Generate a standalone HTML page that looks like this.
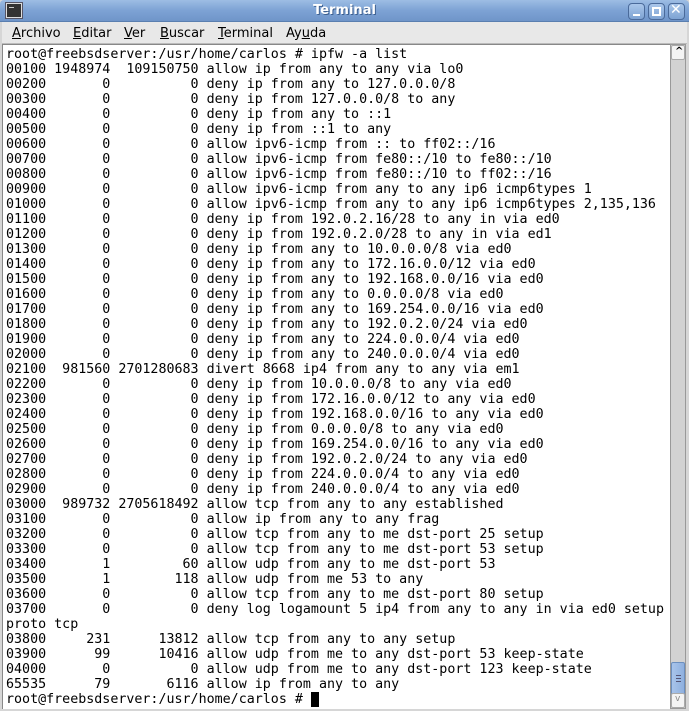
<!DOCTYPE html>
<html><head><meta charset="utf-8"><style>
*{margin:0;padding:0;box-sizing:border-box}
body{width:689px;height:711px;overflow:hidden;background:#d6d6d6;position:relative;font-family:"DejaVu Sans","Liberation Sans",sans-serif}
#title{position:absolute;left:0;top:0;width:689px;height:22px;background:linear-gradient(#9dbde4,#7da2d4 50%,#6f95c9);border-bottom:1px solid #5a7fb0;border-radius:4px 4px 0 0}
#title .t{position:absolute;left:0;right:0;top:3px;text-align:center;color:#fff;font-weight:bold;font-size:13px;text-shadow:1px 1px 0 #3d5f8f}
#icon{position:absolute;left:6px;top:3px;width:16px;height:15px;background:#333;border:1px solid #ddd;outline:1px solid #556}
#icon:after{content:"";position:absolute;left:2px;top:3px;width:5px;height:1px;background:#ccc}
.btn{position:absolute;top:3px;width:17px;height:17px;border:1px solid #4a6a9a;border-radius:4px;background:linear-gradient(#a9c6ea,#7ea3d3)}
#menu{position:absolute;left:2px;top:22px;width:685px;height:22px;background:#e8e8e8;border-bottom:1px solid #bbb;font-size:13px;color:#000}
#menu span{position:absolute;top:4px}
#term{position:absolute;left:2px;top:44px;width:668px;height:665px;background:#fff;border-left:1px solid #888;border-top:1px solid #888}
pre{position:absolute;left:3px;top:2px;font-family:"DejaVu Sans Mono","Liberation Mono",monospace;font-size:13.33px;line-height:15px;color:#000}
#sb{position:absolute;left:670px;top:44px;width:16px;height:665px;background:#d2d2d2;border:1px solid #999}
.arr{position:absolute;left:0;width:14px;height:15px;background:#f4f4f4;border:1px solid #aaa;border-radius:2px}
#thumb{position:absolute;left:0;top:617px;width:14px;height:35px;background:linear-gradient(90deg,#a8c4ea,#8fb0df);border:1px solid #6c8fbf;border-radius:2px}
</style></head><body>
<div id="title"><div id="icon"></div><div class="t">Terminal</div>
<div class="btn" style="left:628px"><div style="position:absolute;left:4px;top:10px;width:7px;height:2px;background:#fff"></div></div>
<div class="btn" style="left:648px"><div style="position:absolute;left:3px;top:3px;width:9px;height:9px;border:2px solid #fff"></div></div>
<div class="btn" style="left:668px"><div style="position:absolute;left:1px;top:-2px;color:#fff;font-weight:bold;font-size:14px">✕</div></div>
</div>
<div id="menu"><span style="left:10px"><u>A</u>rchivo</span><span style="left:71px"><u>E</u>ditar</span><span style="left:122px"><u>V</u>er</span><span style="left:158px"><u>B</u>uscar</span><span style="left:216px"><u>T</u>erminal</span><span style="left:284px">Ay<u>u</u>da</span></div>
<div id="term"><pre>root@freebsdserver:/usr/home/carlos # ipfw -a list
00100 1948974  109150750 allow ip from any to any via lo0
00200       0          0 deny ip from any to 127.0.0.0/8
00300       0          0 deny ip from 127.0.0.0/8 to any
00400       0          0 deny ip from any to ::1
00500       0          0 deny ip from ::1 to any
00600       0          0 allow ipv6-icmp from :: to ff02::/16
00700       0          0 allow ipv6-icmp from fe80::/10 to fe80::/10
00800       0          0 allow ipv6-icmp from fe80::/10 to ff02::/16
00900       0          0 allow ipv6-icmp from any to any ip6 icmp6types 1
01000       0          0 allow ipv6-icmp from any to any ip6 icmp6types 2,135,136
01100       0          0 deny ip from 192.0.2.16/28 to any in via ed0
01200       0          0 deny ip from 192.0.2.0/28 to any in via ed1
01300       0          0 deny ip from any to 10.0.0.0/8 via ed0
01400       0          0 deny ip from any to 172.16.0.0/12 via ed0
01500       0          0 deny ip from any to 192.168.0.0/16 via ed0
01600       0          0 deny ip from any to 0.0.0.0/8 via ed0
01700       0          0 deny ip from any to 169.254.0.0/16 via ed0
01800       0          0 deny ip from any to 192.0.2.0/24 via ed0
01900       0          0 deny ip from any to 224.0.0.0/4 via ed0
02000       0          0 deny ip from any to 240.0.0.0/4 via ed0
02100  981560 2701280683 divert 8668 ip4 from any to any via em1
02200       0          0 deny ip from 10.0.0.0/8 to any via ed0
02300       0          0 deny ip from 172.16.0.0/12 to any via ed0
02400       0          0 deny ip from 192.168.0.0/16 to any via ed0
02500       0          0 deny ip from 0.0.0.0/8 to any via ed0
02600       0          0 deny ip from 169.254.0.0/16 to any via ed0
02700       0          0 deny ip from 192.0.2.0/24 to any via ed0
02800       0          0 deny ip from 224.0.0.0/4 to any via ed0
02900       0          0 deny ip from 240.0.0.0/4 to any via ed0
03000  989732 2705618492 allow tcp from any to any established
03100       0          0 allow ip from any to any frag
03200       0          0 allow tcp from any to me dst-port 25 setup
03300       0          0 allow tcp from any to me dst-port 53 setup
03400       1         60 allow udp from any to me dst-port 53
03500       1        118 allow udp from me 53 to any
03600       0          0 allow tcp from any to me dst-port 80 setup
03700       0          0 deny log logamount 5 ip4 from any to any in via ed0 setup
proto tcp
03800     231      13812 allow tcp from any to any setup
03900      99      10416 allow udp from me to any dst-port 53 keep-state
04000       0          0 allow udp from me to any dst-port 123 keep-state
65535      79       6116 allow ip from any to any
root@freebsdserver:/usr/home/carlos # <span style="background:#000">&nbsp;</span></pre></div>
<div id="sb"><div class="arr" style="top:0"><div style="position:absolute;left:3px;top:0;font-size:10px;font-weight:bold">^</div></div><div id="thumb"><div style="position:absolute;left:4px;top:12px;width:5px;height:7px;border-top:1px solid #557;border-bottom:1px solid #557"><div style="margin-top:2px;height:1px;background:#557"></div></div></div><div class="arr" style="top:648px;height:15px"><div style="position:absolute;left:3px;top:0;font-size:9px;color:#888">v</div></div></div>
</body></html>
